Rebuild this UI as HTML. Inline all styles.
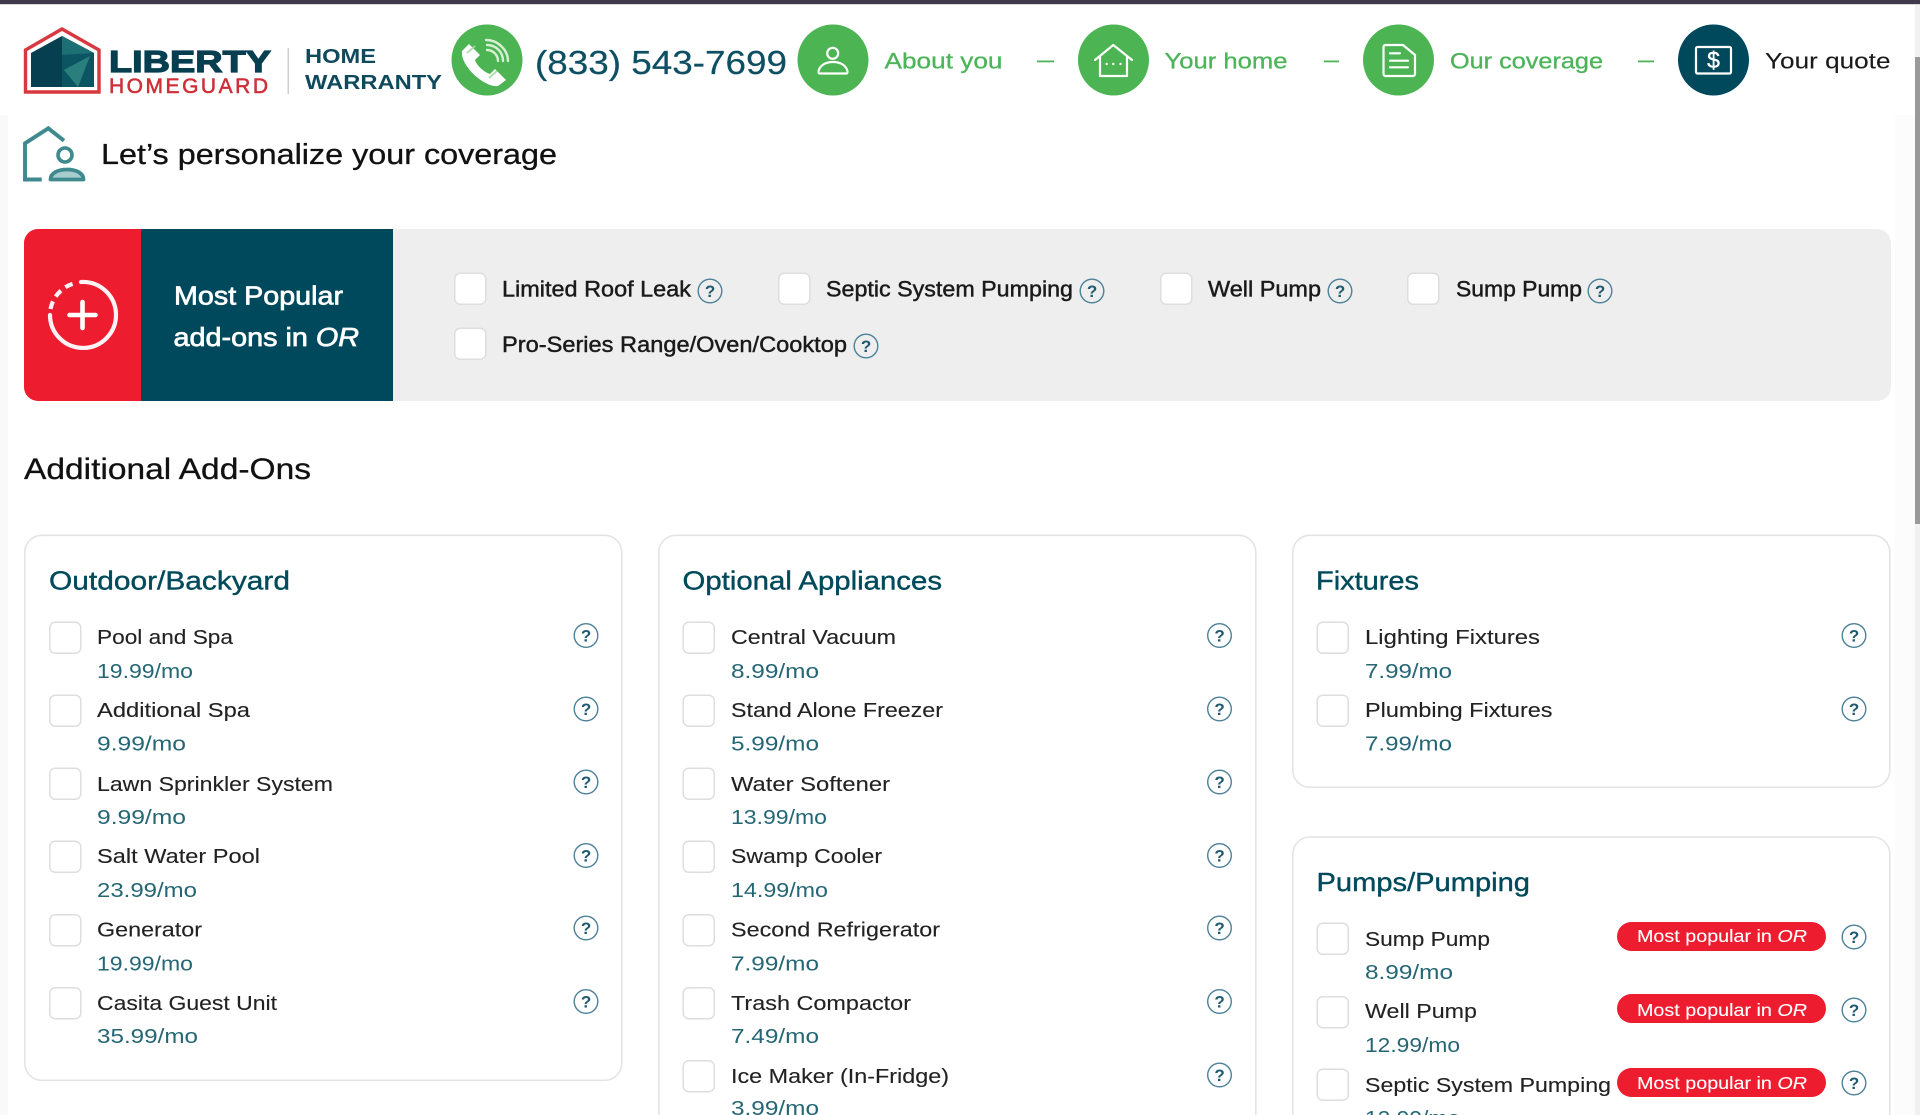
<!DOCTYPE html>
<html lang="en">
<head>
<meta charset="utf-8">
<title>Liberty Home Guard - Let's personalize your coverage</title>
<style>
html,body{margin:0;padding:0;width:1920px;height:1115px;overflow:hidden;background:#fff}
svg{display:block;position:absolute;left:0;top:0}
text{font-family:"Liberation Sans",sans-serif}
.l{font-size:20.5px;fill:#222;stroke:#222;stroke-width:.12}
.p{font-size:20.5px;fill:#256675}
.h{font-size:26px;fill:#004a5c;stroke:#004a5c;stroke-width:.38}
.b{font-size:22px;fill:#1a1a1a;stroke:#1a1a1a;stroke-width:.45}
.s{font-size:22px;fill:#4db45a;stroke:#4db45a;stroke-width:.3}
.q{font-size:17px;font-weight:bold;fill:#1f5a70}
.pill{font-size:17.5px;fill:#fff;stroke:#fff;stroke-width:.12}
.ic{fill:none;stroke:#fff;stroke-width:2.2;stroke-linecap:round;stroke-linejoin:round}
</style>
</head>
<body>
<svg width="1920" height="1115" viewBox="0 0 1920 1115" xmlns="http://www.w3.org/2000/svg">
<defs>
<g id="cb"><rect x=".75" y=".25" width="31" height="31" rx="5.5" fill="#fff" stroke="#dedede" stroke-width="1.5"/></g>
<g id="qm"><circle r="11.8" fill="#fff" stroke="#4d8199" stroke-width="1.4"/><text class="q" y="6" text-anchor="middle">?</text></g>
<g id="qg"><circle r="11.8" fill="none" stroke="#4d8199" stroke-width="1.4"/><text class="q" y="6" text-anchor="middle">?</text></g>
<clipPath id="bc"><rect x="24" y="229" width="1867" height="172" rx="14"/></clipPath>
</defs>

<!-- page chrome -->
<rect width="1920" height="1115" fill="#fff"/>
<rect x="0" y="115" width="8" height="1000" fill="#f9f9f9"/>
<rect x="1895" y="115" width="20" height="1000" fill="#fcfcfc"/>
<rect width="1920" height="4" fill="#3e3a4c"/>
<rect y="4" width="1920" height="1" fill="#d8d8d8"/>
<rect x="1915" y="5" width="5" height="1110" fill="#f1f1f1"/>
<rect x="1915" y="57" width="5" height="467" fill="#9a9a9a"/>

<!-- logo -->
<path d="M62 29 L99 50 V92 H25.5 V50 Z" fill="#fff" stroke="#d8383f" stroke-width="3.4" stroke-linejoin="miter"/>
<path d="M62 36 L94 53 V87 H31 V53 Z" fill="#063f50"/>
<path d="M62 36 L94 53 V87 H62 Z" fill="#0b5563"/>
<path d="M62 36 L94 53 L62 55 Z" fill="#1d6f74"/>
<path d="M64 70 L90 56 L78 87 Z" fill="#2a7f7c"/>
<text x="109" y="72" font-size="31" font-weight="bold" fill="#063f50" stroke="#063f50" stroke-width="1.2" textLength="162" lengthAdjust="spacingAndGlyphs">LIBERTY</text>
<text x="109" y="93" font-size="21" fill="#cf2f38" stroke="#cf2f38" stroke-width=".55" textLength="159" lengthAdjust="spacing">HOMEGUARD</text>
<rect x="287.5" y="48" width="1.5" height="46" fill="#cfcfcf"/>
<text x="305" y="63" font-size="20" font-weight="bold" fill="#0f4a5c" textLength="71" lengthAdjust="spacingAndGlyphs">HOME</text>
<text x="305" y="89" font-size="20" font-weight="bold" fill="#0f4a5c" textLength="137" lengthAdjust="spacingAndGlyphs">WARRANTY</text>

<!-- phone -->
<circle cx="487" cy="60" r="35.5" fill="#4cb453"/>
<path d="M469 44 L480 55 L475 60 C477 66 484 72 490 74 L495 69 L506 80 L498 86 C485 88 460 66 462 51 Z" fill="#fff"/>
<path d="M467 53 L475 46 M489 78 L497 71" stroke="#a8dba8" stroke-width="1.8" fill="none"/>
<g fill="none" stroke="#d6efd3" stroke-width="2.4" stroke-linecap="round">
<path d="M486 40 C498 40 508 50 508 61"/>
<path d="M487 45 C496 45 503 52 503 61"/>
<path d="M487 50 C493 50 498 55 498 61"/>
</g>
<text x="535" y="74" font-size="33" fill="#0d4f63" stroke="#0d4f63" stroke-width=".2" textLength="252" lengthAdjust="spacingAndGlyphs">(833) 543-7699</text>

<!-- steps -->
<circle cx="833" cy="60" r="35.5" fill="#4cb453"/>
<circle class="ic" cx="832.7" cy="53.3" r="5.5"/>
<path class="ic" d="M820 73.5 h26 c1.5 0 1.5-1 1.5-2 c-1-6-7-9.5-14.5-9.5 s-13.5 3.5-14.5 9.5 c0 1 0 2 1.5 2z"/>
<text class="s" x="884.5" y="68.5" textLength="118" lengthAdjust="spacingAndGlyphs">About you</text>
<rect x="1037" y="60.5" width="17" height="1.8" fill="#4db45a"/>

<circle cx="1113.5" cy="60" r="35.5" fill="#4cb453"/>
<path class="ic" d="M1095 60 L1113.3 45 L1132 60 M1100 57 V76 H1127 V57"/>
<g fill="#fff"><circle cx="1106.7" cy="64" r="1.2"/><circle cx="1113.3" cy="64" r="1.2"/><circle cx="1120.5" cy="64" r="1.2"/></g>
<text class="s" x="1164.5" y="68.5" textLength="123" lengthAdjust="spacingAndGlyphs">Your home</text>
<rect x="1324" y="60.5" width="15" height="1.8" fill="#4db45a"/>

<circle cx="1398.5" cy="60" r="35.5" fill="#4cb453"/>
<path class="ic" d="M1383.5 47 a2 2 0 0 1 2-2 H1403 L1415 55 V74 a2 2 0 0 1-2 2 H1385.5 a2 2 0 0 1-2-2 Z M1390 53.3 H1400 M1390 60.7 H1408 M1390 67.3 H1408"/>
<text class="s" x="1450" y="68.5" textLength="153" lengthAdjust="spacingAndGlyphs">Our coverage</text>
<rect x="1638" y="60.5" width="16" height="1.8" fill="#4db45a"/>

<circle cx="1713.5" cy="60" r="35.5" fill="#00495c"/>
<rect class="ic" x="1696" y="47" width="35" height="26.5" rx="1.5"/>
<text x="1713.5" y="68" font-size="23" fill="#fff" stroke="#fff" stroke-width=".4" text-anchor="middle">$</text>
<text x="1765" y="68.5" font-size="22.5" fill="#1a1a1a" stroke="#1a1a1a" stroke-width=".12" textLength="125.5" lengthAdjust="spacingAndGlyphs">Your quote</text>

<!-- title -->
<path d="M41.7 179.5 H25 V143.3 L48.3 128.3 L64 140.7" fill="none" stroke="#3f8a8e" stroke-width="3.9" stroke-linejoin="miter"/>
<circle cx="65" cy="155" r="7" fill="none" stroke="#3f8a8e" stroke-width="3.6"/>
<path d="M50.5 179.5 H83.5 C83.5 173 76 169.5 67 169.5 S50.5 173 50.5 179.5Z" fill="#a8cdce" stroke="#3f8a8e" stroke-width="3.8" stroke-linejoin="round"/>
<text x="101" y="164" font-size="28.5" fill="#111" stroke="#111" stroke-width=".3" textLength="456" lengthAdjust="spacingAndGlyphs">Let’s personalize your coverage</text>

<!-- banner -->
<g clip-path="url(#bc)">
<rect x="24" y="229" width="1867" height="172" fill="#eeeeee"/>
<rect x="24" y="229" width="117" height="172" fill="#ed1c2e"/>
<rect x="141" y="229" width="252" height="172" fill="#00495c"/>
</g>
<path d="M81 282 A33 33 0 1 1 50 315" fill="none" stroke="#fff" stroke-width="4.2" stroke-linecap="round" opacity=".95"/>
<path d="M50.5 309 A33 33 0 0 1 74 283.5" fill="none" stroke="#fff" stroke-width="4.2" stroke-dasharray="8 5.5" opacity=".95"/>
<path d="M69.5 315 H95.5 M82.5 302 V328" fill="none" stroke="#fff" stroke-width="4.6" stroke-linecap="round"/>
<text x="174" y="304.5" font-size="26" fill="#fff" stroke="#fff" stroke-width=".7" textLength="169" lengthAdjust="spacingAndGlyphs">Most Popular</text>
<text x="173.5" y="346" font-size="26" fill="#fff" stroke="#fff" stroke-width=".7" textLength="185.5" lengthAdjust="spacingAndGlyphs">add-ons in <tspan font-style="italic">OR</tspan></text>

<use href="#cb" x="454" y="273"/>
<text class="b" x="502" y="296.5" textLength="189" lengthAdjust="spacingAndGlyphs">Limited Roof Leak</text>
<use href="#qg" x="710" y="291"/>
<use href="#cb" x="778" y="273"/>
<text class="b" x="826" y="296.5" textLength="247" lengthAdjust="spacingAndGlyphs">Septic System Pumping</text>
<use href="#qg" x="1092" y="291"/>
<use href="#cb" x="1160" y="273"/>
<text class="b" x="1208" y="296.5" textLength="113" lengthAdjust="spacingAndGlyphs">Well Pump</text>
<use href="#qg" x="1340" y="291"/>
<use href="#cb" x="1407" y="273"/>
<text class="b" x="1456" y="296.5" textLength="126" lengthAdjust="spacingAndGlyphs">Sump Pump</text>
<use href="#qg" x="1600" y="291"/>
<use href="#cb" x="454" y="328"/>
<text class="b" x="502" y="352" textLength="345" lengthAdjust="spacingAndGlyphs">Pro-Series Range/Oven/Cooktop</text>
<use href="#qg" x="866" y="346"/>

<!-- section title -->
<text x="24" y="479" font-size="30" fill="#111" stroke="#111" stroke-width=".3" textLength="287" lengthAdjust="spacingAndGlyphs">Additional Add-Ons</text>

<!-- cards -->
<g fill="#fff" stroke="#e4e4e4" stroke-width="1.6">
<rect x="24.8" y="535.3" width="597" height="545" rx="17"/>
<path d="M658.8 1115 V552.3 a17 17 0 0 1 17-17 H1238.8 a17 17 0 0 1 17 17 V1115"/>
<rect x="1292.8" y="535.3" width="597" height="252" rx="17"/>
<path d="M1292.8 1115 V854 a17 17 0 0 1 17-17 H1872.8 a17 17 0 0 1 17 17 V1115"/>
</g>

<!-- Outdoor/Backyard -->
<text class="h" x="49" y="589.5" textLength="241" lengthAdjust="spacingAndGlyphs">Outdoor/Backyard</text>
<use href="#cb" x="49" y="622"/><text class="l" x="97" y="644" textLength="136" lengthAdjust="spacingAndGlyphs">Pool and Spa</text><text class="p" x="97" y="678" textLength="96" lengthAdjust="spacingAndGlyphs">19.99/mo</text><use href="#qm" x="586" y="635.5"/>
<use href="#cb" x="49" y="695"/><text class="l" x="97" y="717" textLength="153" lengthAdjust="spacingAndGlyphs">Additional Spa</text><text class="p" x="97" y="750.5" textLength="89" lengthAdjust="spacingAndGlyphs">9.99/mo</text><use href="#qm" x="586" y="709"/>
<use href="#cb" x="49" y="768"/><text class="l" x="97" y="791" textLength="236" lengthAdjust="spacingAndGlyphs">Lawn Sprinkler System</text><text class="p" x="97" y="824" textLength="89" lengthAdjust="spacingAndGlyphs">9.99/mo</text><use href="#qm" x="586" y="782"/>
<use href="#cb" x="49" y="841"/><text class="l" x="97" y="863" textLength="163" lengthAdjust="spacingAndGlyphs">Salt Water Pool</text><text class="p" x="97" y="897" textLength="100" lengthAdjust="spacingAndGlyphs">23.99/mo</text><use href="#qm" x="586" y="855.5"/>
<use href="#cb" x="49" y="914.5"/><text class="l" x="97" y="936.5" textLength="105" lengthAdjust="spacingAndGlyphs">Generator</text><text class="p" x="97" y="970.5" textLength="96" lengthAdjust="spacingAndGlyphs">19.99/mo</text><use href="#qm" x="586" y="928"/>
<use href="#cb" x="49" y="987.5"/><text class="l" x="97" y="1010" textLength="180" lengthAdjust="spacingAndGlyphs">Casita Guest Unit</text><text class="p" x="97" y="1043" textLength="101" lengthAdjust="spacingAndGlyphs">35.99/mo</text><use href="#qm" x="586" y="1001.5"/>

<!-- Optional Appliances -->
<text class="h" x="682.5" y="589.5" textLength="259.5" lengthAdjust="spacingAndGlyphs">Optional Appliances</text>
<use href="#cb" x="682.5" y="622"/><text class="l" x="731" y="644" textLength="165" lengthAdjust="spacingAndGlyphs">Central Vacuum</text><text class="p" x="731" y="678" textLength="88" lengthAdjust="spacingAndGlyphs">8.99/mo</text><use href="#qm" x="1219.5" y="635.5"/>
<use href="#cb" x="682.5" y="695"/><text class="l" x="731" y="717" textLength="212" lengthAdjust="spacingAndGlyphs">Stand Alone Freezer</text><text class="p" x="731" y="750.5" textLength="88" lengthAdjust="spacingAndGlyphs">5.99/mo</text><use href="#qm" x="1219.5" y="709"/>
<use href="#cb" x="682.5" y="768"/><text class="l" x="731" y="791" textLength="159" lengthAdjust="spacingAndGlyphs">Water Softener</text><text class="p" x="731" y="824" textLength="96" lengthAdjust="spacingAndGlyphs">13.99/mo</text><use href="#qm" x="1219.5" y="782"/>
<use href="#cb" x="682.5" y="841"/><text class="l" x="731" y="863" textLength="151" lengthAdjust="spacingAndGlyphs">Swamp Cooler</text><text class="p" x="731" y="897" textLength="97" lengthAdjust="spacingAndGlyphs">14.99/mo</text><use href="#qm" x="1219.5" y="855.5"/>
<use href="#cb" x="682.5" y="914.5"/><text class="l" x="731" y="936.5" textLength="209" lengthAdjust="spacingAndGlyphs">Second Refrigerator</text><text class="p" x="731" y="970.5" textLength="88" lengthAdjust="spacingAndGlyphs">7.99/mo</text><use href="#qm" x="1219.5" y="928"/>
<use href="#cb" x="682.5" y="987.5"/><text class="l" x="731" y="1010" textLength="180" lengthAdjust="spacingAndGlyphs">Trash Compactor</text><text class="p" x="731" y="1043" textLength="88" lengthAdjust="spacingAndGlyphs">7.49/mo</text><use href="#qm" x="1219.5" y="1001.5"/>
<use href="#cb" x="682.5" y="1060.5"/><text class="l" x="731" y="1083" textLength="218" lengthAdjust="spacingAndGlyphs">Ice Maker (In-Fridge)</text><text class="p" x="731" y="1115" textLength="88" lengthAdjust="spacingAndGlyphs">3.99/mo</text><use href="#qm" x="1219.5" y="1075"/>

<!-- Fixtures -->
<text class="h" x="1316" y="589.5" textLength="103" lengthAdjust="spacingAndGlyphs">Fixtures</text>
<use href="#cb" x="1316.5" y="622"/><text class="l" x="1365" y="644" textLength="175" lengthAdjust="spacingAndGlyphs">Lighting Fixtures</text><text class="p" x="1365" y="678" textLength="87" lengthAdjust="spacingAndGlyphs">7.99/mo</text><use href="#qm" x="1854" y="635.5"/>
<use href="#cb" x="1316.5" y="695"/><text class="l" x="1365" y="717" textLength="187.5" lengthAdjust="spacingAndGlyphs">Plumbing Fixtures</text><text class="p" x="1365" y="750.5" textLength="87" lengthAdjust="spacingAndGlyphs">7.99/mo</text><use href="#qm" x="1854" y="709"/>

<!-- Pumps/Pumping -->
<text class="h" x="1316.5" y="891" textLength="213.5" lengthAdjust="spacingAndGlyphs">Pumps/Pumping</text>
<use href="#cb" x="1316.5" y="923"/><text class="l" x="1365" y="946" textLength="125" lengthAdjust="spacingAndGlyphs">Sump Pump</text><text class="p" x="1365" y="979" textLength="88" lengthAdjust="spacingAndGlyphs">8.99/mo</text>
<rect x="1617" y="922" width="209" height="29" rx="14.5" fill="#ed1c2e"/><text class="pill" x="1637" y="942" textLength="170" lengthAdjust="spacingAndGlyphs">Most popular in <tspan font-style="italic">OR</tspan></text><use href="#qm" x="1854" y="937"/>
<use href="#cb" x="1316.5" y="996.5"/><text class="l" x="1365" y="1018" textLength="112" lengthAdjust="spacingAndGlyphs">Well Pump</text><text class="p" x="1365" y="1052" textLength="95" lengthAdjust="spacingAndGlyphs">12.99/mo</text>
<rect x="1617" y="994" width="209" height="29" rx="14.5" fill="#ed1c2e"/><text class="pill" x="1637" y="1016" textLength="170" lengthAdjust="spacingAndGlyphs">Most popular in <tspan font-style="italic">OR</tspan></text><use href="#qm" x="1854" y="1010"/>
<use href="#cb" x="1316.5" y="1069"/><text class="l" x="1365" y="1092" textLength="246" lengthAdjust="spacingAndGlyphs">Septic System Pumping</text><text class="p" x="1365" y="1125" textLength="95" lengthAdjust="spacingAndGlyphs">12.99/mo</text>
<rect x="1617" y="1068" width="209" height="29" rx="14.5" fill="#ed1c2e"/><text class="pill" x="1637" y="1089" textLength="170" lengthAdjust="spacingAndGlyphs">Most popular in <tspan font-style="italic">OR</tspan></text><use href="#qm" x="1854" y="1083"/>
</svg>
</body>
</html>
